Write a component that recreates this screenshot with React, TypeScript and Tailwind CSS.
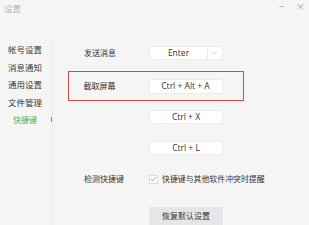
import React from "react";

const cjk = { fontFamily: '"Noto Sans CJK SC", "Noto Sans", sans-serif' };
const lat = { fontFamily: '"Open Sans", "Noto Sans CJK SC", sans-serif' };

function KeyBox({ text }: { text: string }) {
  return (
    <div
      className="w-[74px] h-[14px] bg-white border border-[#ececec] flex items-center justify-center text-[8.5px] text-[#333]"
      style={lat}
    >
      {text}
    </div>
  );
}

export default function App() {
  const side = ["帐号设置", "消息通知", "通用设置", "文件管理"];
  return (
    <div className="w-[309px] h-[225px] bg-[#f5f5f5] overflow-hidden flex flex-col" style={cjk}>
      <div className="h-[40px] flex justify-between items-start">
        <div className="pl-[4px] pt-[2px] text-[8.5px] leading-[12px] text-[#b5b5b5]">设置</div>
        <div className="flex items-center gap-[12px] pr-[4px] pt-[1px] text-[9px] leading-[12px] text-[#999]">
          <span>−</span>
          <span>×</span>
        </div>
      </div>
      <div className="flex flex-1">
        <div className="w-[53px] border-r border-[#ececec] pt-[5px] flex flex-col">
          {side.map((s) => (
            <div key={s} className="h-[17.5px] flex items-center pl-[8px] text-[8.5px] text-[#3a3a3a]">
              {s}
            </div>
          ))}
          <div className="h-[17.5px] flex items-center justify-between pl-[13px] text-[8px] text-[#4cb050]">
            <span>快捷键</span>
            <span className="w-[1px] h-[5px] bg-[#4cb050]"></span>
          </div>
        </div>
        <div className="flex flex-col pl-[15px] pt-[10px] text-[8px] text-[#333]">
          <div className="flex items-center h-[14px] pl-[16px]">
            <div className="w-[65px]">发送消息</div>
            <div className="w-[74px] h-[14px] bg-white border border-[#ececec] flex items-center">
              <div className="w-[57px] text-center text-[8.5px]" style={lat}>
                Enter
              </div>
              <div className="h-full border-l border-[#ececec] flex-1 flex items-center justify-center">
                <svg width="6" height="4" viewBox="0 0 6 4">
                  <path d="M0.5 0.8 L3 3.2 L5.5 0.8" fill="none" stroke="#c8c8c8" strokeWidth="0.8" />
                </svg>
              </div>
            </div>
          </div>
          <div className="mt-[11px] w-[176px] h-[30px] border-[1.5px] border-[#d54a43] flex items-center pl-[14.5px]">
            <div className="w-[65px]">截取屏幕</div>
            <div
              className="w-[74px] h-[15px] bg-white border border-[#ececec] flex items-center justify-center text-[8.5px]"
              style={lat}
            >
              Ctrl + Alt + A
            </div>
          </div>
          <div className="mt-[9px] flex pl-[81px]">
            <KeyBox text="Ctrl + X" />
          </div>
          <div className="mt-[17px] flex pl-[81px]">
            <KeyBox text="Ctrl + L" />
          </div>
          <div className="mt-[19px] flex items-center h-[10px] pl-[16px]">
            <div className="w-[65px]">检测快捷键</div>
            <div className="w-[9px] h-[9px] bg-white border border-[#dcdcdc] flex items-center justify-center">
              <svg width="7" height="6" viewBox="0 0 7 6">
                <path d="M0.8 3.2 L2.6 4.8 L6.2 1" fill="none" stroke="#4cb050" strokeWidth="0.8" />
              </svg>
            </div>
            <div className="ml-[4px] text-[7.9px] whitespace-nowrap">快捷键与其他软件冲突时提醒</div>
          </div>
          <div className="mt-[23px] pl-[81px]">
            <div className="w-[74px] h-[18px] bg-[#e6e6e6] flex items-center justify-center text-[8px] text-[#333]">
              恢复默认设置
            </div>
          </div>
        </div>
      </div>
    </div>
  );
}
